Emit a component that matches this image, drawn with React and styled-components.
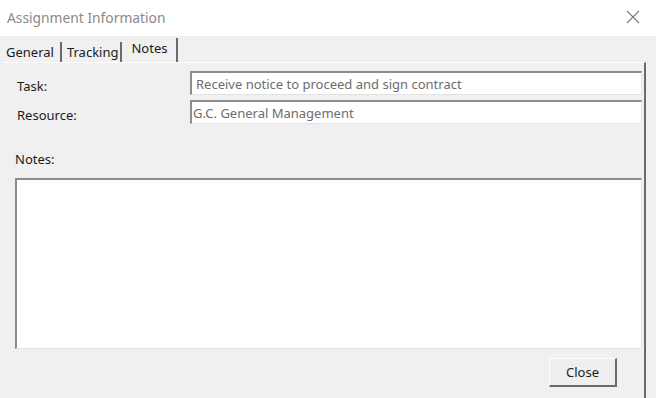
import React from "react";
import styled, { createGlobalStyle } from "styled-components";

const Global = createGlobalStyle`
  html, body { margin: 0; padding: 0; background: #f0f0f0; }
  body { font-family: "Noto Sans", "Open Sans", sans-serif; }
`;

const Window = styled.div`
  width: 656px;
  height: 398px;
  background: #f0f0f0;
  display: flex;
  flex-direction: column;
  overflow: hidden;
`;

const TitleBar = styled.div`
  height: 36px;
  background: #ffffff;
  display: flex;
  align-items: center;
  justify-content: space-between;
  padding: 0 16px 2px 7px;
  box-sizing: border-box;
`;

const Title = styled.span`
  font-size: 13.8px;
  color: #8a8a8a;
`;

const Body = styled.div`
  flex: 1;
  display: flex;
  flex-direction: column;
  padding: 2px 10px 0 3px;
`;

const TabStrip = styled.div`
  display: flex;
  align-items: flex-end;
  height: 24px;
`;

const Tab = styled.div`
  font-size: 13px;
  color: #1a1a1a;
  padding: 0 ${(p) => p.$r}px 0 ${(p) => p.$l}px;
  height: ${(p) => (p.$active ? "24px" : "20px")};
  line-height: 20px;
  border-right: 2px solid #6a6a6a;
  background: #f0f0f0;
  box-sizing: border-box;
`;

const Panel = styled.div`
  flex: 1;
  border-right: 2px solid #6a6a6a;
  border-top: 1px solid #ffffff;
  display: flex;
  flex-direction: column;
  padding: 8px 2px 0 12px;
`;

const FieldGrid = styled.div`
  display: grid;
  grid-template-columns: 175px 1fr;
  row-gap: 5px;
`;

const Label = styled.label`
  font-size: 13px;
  color: #1a1a1a;
  display: flex;
  align-items: center;
  padding: 5px 0 0 2px;
`;

const Field = styled.div`
  height: 24px;
  box-sizing: border-box;
  background: #ffffff;
  border-top: 2px solid #8c8c8c;
  border-left: 2px solid #8c8c8c;
  border-right: 1px solid #e3e3e3;
  border-bottom: 1px solid #e3e3e3;
  font-size: 13px;
  color: #6d6d6d;
  padding-left: ${(p) => p.$pad || 4}px;
  display: flex;
  align-items: center;
`;

const NotesLabel = styled.div`
  font-size: 13px;
  color: #1a1a1a;
  margin: 26px 0 0 0;
  height: 20px;
`;

const NotesBox = styled.div`
  margin-top: 8px;
  height: 171px;
  box-sizing: border-box;
  background: #ffffff;
  border-top: 2px solid #8c8c8c;
  border-left: 2px solid #8c8c8c;
  border-right: 1px solid #e3e3e3;
  border-bottom: 1px solid #e3e3e3;
`;

const Footer = styled.div`
  display: flex;
  justify-content: flex-end;
  padding: 9px 25px 0 0;
`;

const Button = styled.button`
  width: 68px;
  height: 29px;
  font-family: inherit;
  font-size: 13px;
  color: #1a1a1a;
  background: #efefef;
  border-top: 1px solid #ffffff;
  border-left: 1px solid #ffffff;
  border-right: 2px solid #6a6a6a;
  border-bottom: 2px solid #6a6a6a;
  box-sizing: border-box;
  padding: 0;
`;

export default function App() {
  return (
    <>
      <Global />
      <Window>
        <TitleBar>
          <Title>Assignment Information</Title>
          <svg width="14" height="14" viewBox="0 0 14 14">
            <path d="M1 1L13 13M13 1L1 13" stroke="#7a7a7a" strokeWidth="1.1" />
          </svg>
        </TitleBar>
        <Body>
          <TabStrip>
            <Tab $l={3} $r={6}>General</Tab>
            <Tab $l={5} $r={2}>Tracking</Tab>
            <Tab $active $l={9} $r={9}>Notes</Tab>
          </TabStrip>
          <Panel>
            <FieldGrid>
              <Label>Task:</Label>
              <Field>Receive notice to proceed and sign contract</Field>
              <Label>Resource:</Label>
              <Field $pad={1}>G.C. General Management</Field>
            </FieldGrid>
            <NotesLabel>Notes:</NotesLabel>
            <NotesBox />
            <Footer>
              <Button>Close</Button>
            </Footer>
          </Panel>
        </Body>
      </Window>
    </>
  );
}
